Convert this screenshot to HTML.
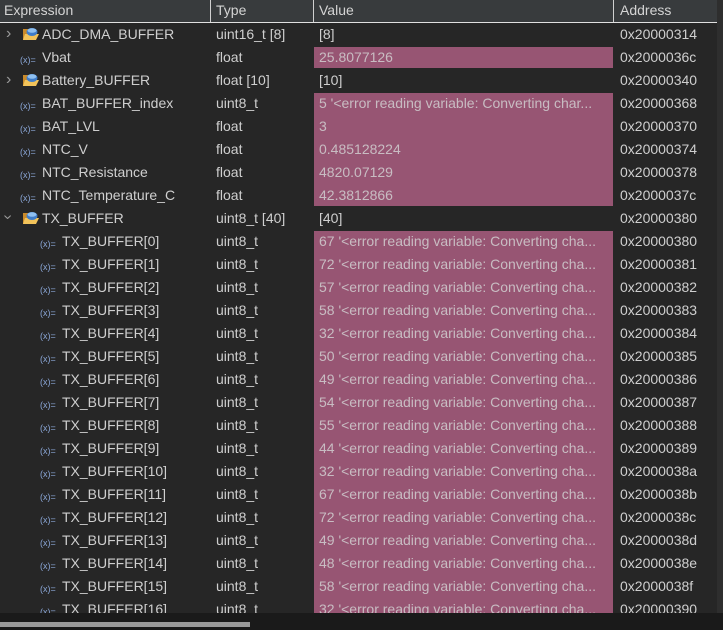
<!DOCTYPE html>
<html><head><meta charset="utf-8"><style>
*{margin:0;padding:0;box-sizing:border-box}
html,body{width:723px;height:630px;overflow:hidden}
body{background:#262626;position:relative;font-family:"Liberation Sans",sans-serif;font-size:14px;color:#cfcfcf}
.hdr{position:absolute;left:0;top:0;width:717px;height:23px;background:#383b3d;border-bottom:1px solid #e0e0e0}
.hdr span{position:absolute;top:2px;color:#d4d4d4}
.vl{position:absolute;top:0;width:1px;height:22px;background:#d0d0d0}
.r{position:absolute;left:0;width:717px;height:23px}
.r span{position:absolute;top:3px;white-space:nowrap}
.pk{position:absolute;left:314px;width:299px;background:#975573}
.ic{position:absolute}
.sb{position:absolute;left:0;top:613px;width:723px;height:17px;background:#1a1a1a}
.th{position:absolute;left:0;top:9px;width:250px;height:5px;background:#9a9a9a}
</style></head><body>
<div class="hdr"><span style="left:4px">Expression</span><span style="left:216px">Type</span><span style="left:319px">Value</span><span style="left:620px">Address</span></div>
<div class="vl" style="left:210px"></div><div class="vl" style="left:313px"></div><div class="vl" style="left:613px"></div>
<div style="position:absolute;left:717px;top:0;width:6px;height:613px;background:#2e2e2e"></div>
<div id="rows"></div>
<div class="sb"><div class="th"></div></div>
<script>
var folder='<svg width="18" height="15" viewBox="0 0 18 15"><path d="M1 3h5l1 1h7v10H1z" fill="#c98a2a"/><path d="M3 8h14l-3 6H1z" fill="#f2c35a"/><ellipse cx="10" cy="6" rx="5.5" ry="4" fill="#3f7cc8"/><ellipse cx="10" cy="4.5" rx="4.5" ry="2.3" fill="#8fc0f0"/></svg>';
var vr='<svg width="20" height="10" viewBox="0 0 20 10"><text x="0" y="8" font-size="9" fill="#8aa6d6" font-family="Liberation Sans">(x)=</text></svg>';
var rows=[
['>',0,'f','ADC_DMA_BUFFER','uint16_t [8]','[8]','0x20000314',0],
['',0,'v','Vbat','float','25.8077126','0x2000036c',1],
['>',0,'f','Battery_BUFFER','float [10]','[10]','0x20000340',0],
['',0,'v','BAT_BUFFER_index','uint8_t',"5 '<error reading variable: Converting char...",'0x20000368',1],
['',0,'v','BAT_LVL','float','3','0x20000370',1],
['',0,'v','NTC_V','float','0.485128224','0x20000374',1],
['',0,'v','NTC_Resistance','float','4820.07129','0x20000378',1],
['',0,'v','NTC_Temperature_C','float','42.3812866','0x2000037c',1],
['v',0,'f','TX_BUFFER','uint8_t [40]','[40]','0x20000380',0]];
var vals=[67,72,57,58,32,50,49,54,55,44,32,67,72,49,48,58,32];
for(var i=0;i<17;i++)rows.push(['',1,'v','TX_BUFFER['+i+']','uint8_t',vals[i]+" '<error reading variable: Converting cha...",'0x20000'+(0x380+i).toString(16),1]);
var h='';
rows.forEach(function(r,i){
 var t=23+i*23;
 if(r[7]){var prev=i>0&&rows[i-1][7],next=i<rows.length-1&&rows[i+1][7];
  h+='<div class="pk" style="top:'+(t+(prev?0:1))+'px;height:'+(23-(prev?0:1)-(next?0:1))+'px"></div>';}
 var ind=r[1]?20:0;
 h+='<div class="r" style="top:'+t+'px">';
 if(r[0]=='>')h+='<span style="left:6px;color:#9a9a9a;top:2px;font-size:16px">&#8250;</span>';
 if(r[0]=='v')h+='<span style="left:5px;color:#9a9a9a;top:1px;font-size:16px;transform:rotate(90deg)">&#8250;</span>';
 h+='<span class="ic" style="left:'+(r[2]=='f'?22:20+ind)+'px;top:'+(r[2]=='f'?3:6)+'px">'+(r[2]=='f'?folder:vr)+'</span>';
 h+='<span style="left:'+(42+ind)+'px">'+r[3]+'</span><span style="left:216px">'+r[4]+'</span>';
 h+='<span style="left:319px;'+(r[7]?'color:#c8bcc2':'')+'">'+r[5].replace(/</g,'&lt;')+'</span><span style="left:620px">'+r[6]+'</span></div>';
});
document.getElementById('rows').innerHTML=h;
</script>
</body></html>
